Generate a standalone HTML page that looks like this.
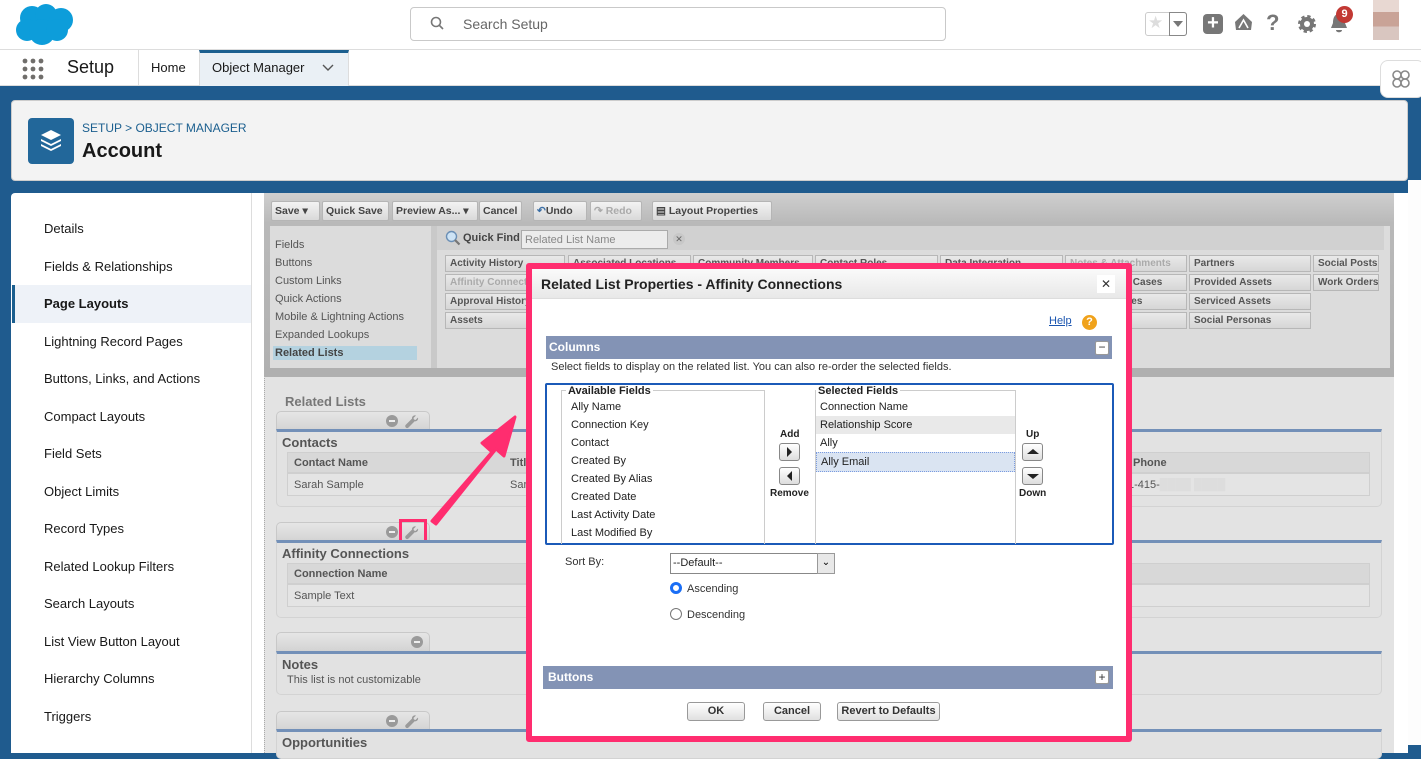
<!DOCTYPE html>
<html><head><meta charset="utf-8"><style>
*{box-sizing:border-box;margin:0;padding:0}
body{width:1421px;height:745px;overflow:hidden;position:relative;font-family:"Liberation Sans",Arial,sans-serif;background:#1f5b8e}
.a{position:absolute}
.sb{position:absolute;left:44px;font-size:13px;color:#181818}
.pb{position:absolute;height:17px;border:1px solid #b7b7b7;background:linear-gradient(#e9e9e9,#d6d6d6);font-size:10px;font-weight:bold;color:#555;padding:2px 4px;white-space:nowrap;overflow:hidden}
.tb{position:absolute;top:201px;height:20px;border:1px solid #b5b5b5;background:linear-gradient(#f3f3f3,#d9d9d9);font-size:10.5px;font-weight:bold;color:#444;padding:3px 3px;white-space:nowrap;border-radius:2px;overflow:hidden}
.pl{position:absolute;left:275px;font-size:11px;color:#555}
.hand{position:absolute;left:276px;width:154px;height:19px;background:linear-gradient(#e6e6e6,#d3d3d3);border:1px solid #c8c8c8;border-bottom:none;border-radius:5px 5px 0 0}
.mi{position:absolute;width:12px;height:12px;border-radius:50%;background:#9a9a9a;top:3px}
.mi:after{content:"";position:absolute;left:3px;top:5px;width:6px;height:2px;background:#eee}
.wr{position:absolute;top:2px}
.blk{position:absolute;left:276px;width:1106px;border-top:3px solid #7390b8;background:#e2e2e2;border-radius:0 0 5px 5px;border-left:1px solid #d3d3d3;border-right:1px solid #d3d3d3;border-bottom:1px solid #d3d3d3}
.bt{font-size:13px;font-weight:bold;color:#555;padding:3px 5px 0}
.th{position:absolute;left:10px;width:1083px;height:21px;background:#d8d8d8;border:1px solid #cfcfcf;font-size:11px;font-weight:bold;color:#555;padding:4px 6px}
.td{position:absolute;left:10px;width:1083px;height:23px;border:1px solid #cfcfcf;font-size:11px;color:#555;padding:5px 6px;background:#e4e4e4}
.li{position:absolute;left:9px;font-size:11px;color:#222}
.sbtn{position:absolute;height:19px;border:1px solid #999;border-radius:3px;background:linear-gradient(#fff,#e0e0e0);font-size:11px;font-weight:bold;color:#333;text-align:center;padding-top:2px}
.ab{position:absolute;width:21px;height:18px;border:1px solid #888;border-radius:3px;background:linear-gradient(#fff,#ddd)}
</style></head><body>
<svg width="0" height="0" style="position:absolute"><defs><symbol id="w" viewBox="0 0 16 16"><path d="M14 3.5 L11.5 6 L10 5.5 L9.5 4 L12 1.5 C10 0.8 7.8 2.2 8 4.6 L1.8 10.8 C1 11.6 1 12.7 1.8 13.5 C2.6 14.3 3.7 14.3 4.5 13.5 L10.7 7.3 C13 7.6 14.6 5.5 14 3.5Z" fill="#9a9a9a"/></symbol></defs></svg>
<!-- top header -->
<div class="a" style="left:0;top:0;width:1421px;height:50px;background:#fff;border-bottom:1px solid #ddd"></div>
<svg class="a" style="left:14px;top:3px" width="60" height="42" viewBox="0 0 60 42"><g fill="#0d9dda"><circle cx="18" cy="15" r="12"/><circle cx="32" cy="12" r="11"/><circle cx="47" cy="17" r="12"/><circle cx="13" cy="27" r="11"/><circle cx="28" cy="29" r="13"/><circle cx="43" cy="27" r="11"/></g></svg>
<div class="a" style="left:410px;top:7px;width:536px;height:34px;border:1px solid #c9c9c9;border-radius:4px;background:#fff"></div>
<svg class="a" style="left:430px;top:16px" width="14" height="14"><circle cx="6" cy="6" r="4.5" stroke="#777" stroke-width="1.6" fill="none"/><line x1="9.5" y1="9.5" x2="13" y2="13" stroke="#777" stroke-width="1.6"/></svg>
<div class="a" style="left:463px;top:16px;font-size:14px;color:#666">Search Setup</div>
<div class="a" style="left:1145px;top:12px;width:42px;height:24px;border:1px solid #ccc;border-radius:3px;background:#fff"></div>
<div class="a" style="left:1148px;top:13px;font-size:17px;color:#ddd">★</div>
<div class="a" style="left:1169px;top:12px;width:18px;height:24px;border:1px solid #888;border-radius:0 3px 3px 0"></div>
<div class="a" style="left:1173px;top:21px;border:5px solid transparent;border-top:6px solid #777"></div>
<div class="a" style="left:1203px;top:14px;width:20px;height:20px;border-radius:4px;background:#777;color:#fff;font-size:20px;line-height:19px;text-align:center;font-weight:bold">+</div>
<svg class="a" style="left:1233px;top:13px" width="21" height="20"><path d="M10.5 1 L19 9 L18 17 L3 17 L2 9Z" fill="#777"/><path d="M6 15 L10.5 7 L15 15" stroke="#fff" stroke-width="1.6" fill="none"/></svg>
<div class="a" style="left:1266px;top:10px;font-size:22px;color:#777;font-weight:bold">?</div>
<svg class="a" style="left:1297px;top:14px" width="20" height="20"><circle cx="10" cy="10" r="7" fill="#777" stroke="#777" stroke-width="4" stroke-dasharray="3 2.5"/><circle cx="10" cy="10" r="3" fill="#fff"/></svg>
<svg class="a" style="left:1328px;top:12px" width="22" height="22"><path d="M11 2 C6 2 5 7 5 11 L3 16 L19 16 L17 11 C17 7 16 2 11 2Z M8 18 L14 18 C14 21 8 21 8 18Z" fill="#777"/></svg>
<div class="a" style="left:1336px;top:6px;width:17px;height:17px;border-radius:50%;background:#c23934;color:#fff;font-size:11px;font-weight:bold;text-align:center;line-height:17px">9</div>
<div class="a" style="left:1373px;top:0;width:26px;height:40px;background:linear-gradient(#e8d8d2 0 30%,#c9a397 30% 66%,#d9c6c0 66%)"></div>
<!-- nav -->
<div class="a" style="left:0;top:50px;width:1421px;height:36px;background:#fff;border-bottom:1px solid #ddd"></div>
<svg class="a" style="left:22px;top:58px" width="22" height="22"><g fill="#706e6b"><circle cx="3" cy="3" r="2.4"/><circle cx="11" cy="3" r="2.4"/><circle cx="19" cy="3" r="2.4"/><circle cx="3" cy="11" r="2.4"/><circle cx="11" cy="11" r="2.4"/><circle cx="19" cy="11" r="2.4"/><circle cx="3" cy="19" r="2.4"/><circle cx="11" cy="19" r="2.4"/><circle cx="19" cy="19" r="2.4"/></g></svg>
<div class="a" style="left:67px;top:57px;font-size:18px;color:#181818">Setup</div>
<div class="a" style="left:138px;top:50px;width:1px;height:36px;background:#ddd"></div>
<div class="a" style="left:151px;top:60px;font-size:13px;color:#181818">Home</div>
<div class="a" style="left:199px;top:50px;width:150px;height:36px;background:#eaf0f5;border-top:3px solid #1b5f8f;border-right:1px solid #ddd;border-left:1px solid #ddd"></div>
<div class="a" style="left:212px;top:60px;font-size:13px;color:#181818">Object Manager</div>
<svg class="a" style="left:322px;top:64px" width="12" height="8"><path d="M1 1 L6 6 L11 1" stroke="#555" stroke-width="1.4" fill="none"/></svg>
<div class="a" style="left:1380px;top:60px;width:45px;height:38px;background:#fff;border-radius:8px;border:1px solid #ddd"></div>
<svg class="a" style="left:1391px;top:69px" width="20" height="20"><g stroke="#888" stroke-width="1.6" fill="none"><circle cx="6" cy="6" r="4"/><circle cx="14" cy="6" r="4"/><circle cx="6" cy="14" r="4"/><circle cx="14" cy="14" r="4"/></g></svg>
<!-- header card -->
<div class="a" style="left:11px;top:100px;width:1397px;height:81px;background:#f3f3f3;border:1px solid #ccc;border-radius:4px"></div>
<div class="a" style="left:28px;top:118px;width:46px;height:46px;background:#22679a;border-radius:4px"></div>
<svg class="a" style="left:39px;top:128px" width="24" height="24"><g fill="#fff"><path d="M12 2 L22 7 L12 12 L2 7Z"/><path d="M2 11 L12 16 L22 11 L22 13 L12 18 L2 13Z"/><path d="M2 16 L12 21 L22 16 L22 18 L12 23 L2 18Z"/></g></svg>
<div class="a" style="left:82px;top:121px;font-size:12px;color:#1b5f8f">SETUP &gt; OBJECT MANAGER</div>
<div class="a" style="left:82px;top:140px;font-size:20px;font-weight:bold;color:#181818">Account</div>
<!-- main -->
<div class="a" style="left:11px;top:193px;width:1397px;height:560px;background:#fff;border-radius:4px 4px 0 0"></div>
<div class="a" style="left:251px;top:193px;width:1px;height:560px;background:#ddd"></div>
<div class="a" style="left:12px;top:285px;width:239px;height:38px;background:#eef2f8;border-left:3px solid #1b5f8f"></div>
<div class="sb" style="top:221px">Details</div>
<div class="sb" style="top:259px">Fields &amp; Relationships</div>
<div class="sb" style="top:296px;font-weight:bold">Page Layouts</div>
<div class="sb" style="top:334px">Lightning Record Pages</div>
<div class="sb" style="top:371px">Buttons, Links, and Actions</div>
<div class="sb" style="top:409px">Compact Layouts</div>
<div class="sb" style="top:446px">Field Sets</div>
<div class="sb" style="top:484px">Object Limits</div>
<div class="sb" style="top:521px">Record Types</div>
<div class="sb" style="top:559px">Related Lookup Filters</div>
<div class="sb" style="top:596px">Search Layouts</div>
<div class="sb" style="top:634px">List View Button Layout</div>
<div class="sb" style="top:671px">Hierarchy Columns</div>
<div class="sb" style="top:709px">Triggers</div>
<!-- right work area -->
<div class="a" style="left:264px;top:193px;width:1130px;height:560px;background:#e3e3e3;border-left:1px dotted #aaa"></div>
<div class="a" style="left:1394px;top:193px;width:14px;height:560px;background:#fff"></div>
<div class="a" style="left:1408px;top:180px;width:13px;height:565px;background:#fdfdfd"></div>
<div class="a" style="left:264px;top:193px;width:1130px;height:184px;background:linear-gradient(#cfcfcf,#b9b9b9 30px,#b0b0b0)"></div>
<div class="a" style="left:270px;top:226px;width:1120px;height:142px;background:#dcdcdc"></div>
<div class="a" style="left:431px;top:226px;width:6px;height:142px;background:#c9c9c9"></div>
<div class="a" style="left:437px;top:226px;width:947px;height:24px;background:#d1d1d1"></div>
<div class="tb" style="left:271px;width:49px">Save ▾</div>
<div class="tb" style="left:322px;width:67px">Quick Save</div>
<div class="tb" style="left:392px;width:86px">Preview As... ▾</div>
<div class="tb" style="left:479px;width:43px">Cancel</div>
<div class="tb" style="left:533px;width:54px"><span style="color:#3a6ea5">↶</span>Undo</div>
<div class="tb" style="left:590px;width:52px;color:#aaa">↷ Redo</div>
<div class="tb" style="left:652px;width:120px">▤ Layout Properties</div>
<div class="pl" style="top:239px">Fields</div>
<div class="pl" style="top:257px">Buttons</div>
<div class="pl" style="top:275px">Custom Links</div>
<div class="pl" style="top:293px">Quick Actions</div>
<div class="pl" style="top:311px">Mobile &amp; Lightning Actions</div>
<div class="pl" style="top:329px">Expanded Lookups</div>
<div class="a" style="left:273px;top:346px;width:144px;height:14px;background:#b4d2e0"></div>
<div class="pl" style="top:347px;font-weight:bold;color:#444">Related Lists</div>
<svg class="a" style="left:445px;top:230px" width="16" height="16"><circle cx="6.5" cy="6.5" r="5" fill="#cde3f5" stroke="#6b8fb5" stroke-width="1.4"/><line x1="10" y1="10" x2="14.5" y2="14.5" stroke="#777" stroke-width="2.2"/></svg>
<div class="a" style="left:463px;top:232px;font-size:11px;font-weight:bold;color:#444">Quick Find</div>
<div class="a" style="left:521px;top:230px;width:147px;height:19px;border:1px solid #aaa;background:#ececec;font-size:11px;color:#888;padding:3px 3px">Related List Name</div>
<div class="a" style="left:673px;top:233px;width:12px;height:12px;border-radius:50%;background:#c8c8c8;font-size:9px;color:#666;text-align:center;line-height:12px">✕</div>
<div class="pb" style="left:445px;top:255px;width:120px">Activity History</div>
<div class="pb" style="left:568px;top:255px;width:123px">Associated Locations</div>
<div class="pb" style="left:693px;top:255px;width:120px">Community Members</div>
<div class="pb" style="left:815px;top:255px;width:123px">Contact Roles</div>
<div class="pb" style="left:940px;top:255px;width:123px">Data Integration</div>
<div class="pb" style="left:1065px;top:255px;width:122px;color:#aaa">Notes &amp; Attachments</div>
<div class="pb" style="left:1189px;top:255px;width:122px">Partners</div>
<div class="pb" style="left:1313px;top:255px;width:66px">Social Posts</div>
<div class="pb" style="left:445px;top:274px;width:120px;color:#aaa">Affinity Connections</div>
<div class="pb" style="left:1065px;top:274px;width:122px">Entitlements Cases</div>
<div class="pb" style="left:1189px;top:274px;width:122px">Provided Assets</div>
<div class="pb" style="left:1313px;top:274px;width:66px">Work Orders</div>
<div class="pb" style="left:445px;top:293px;width:120px">Approval History</div>
<div class="pb" style="left:1065px;top:293px;width:122px">Open Activities</div>
<div class="pb" style="left:1189px;top:293px;width:122px">Serviced Assets</div>
<div class="pb" style="left:445px;top:312px;width:120px">Assets</div>
<div class="pb" style="left:1065px;top:312px;width:122px">Orders</div>
<div class="pb" style="left:1189px;top:312px;width:122px">Social Personas</div>
<!-- related lists -->
<div class="a" style="left:285px;top:394px;font-size:13px;font-weight:bold;color:#777">Related Lists</div>
<div class="hand" style="top:411px"><div class="mi" style="left:109px"></div><svg class="wr" style="left:127px" width="16" height="16"><use href="#w"/></svg></div>
<div class="blk" style="top:429px;height:78px"><div class="bt">Contacts</div>
<div class="th" style="top:20px">Contact Name<span style="position:absolute;left:222px">Title</span><span style="position:absolute;left:845px">Phone</span></div>
<div class="td" style="top:41px">Sarah Sample<span style="position:absolute;left:222px">Sarah</span><span style="position:absolute;left:840px">1-415-<span style="color:#ddd">████ ████</span></span></div></div>
<div class="hand" style="top:522px"><div class="mi" style="left:109px"></div><svg class="wr" style="left:127px" width="16" height="16"><use href="#w"/></svg></div>
<div class="a" style="left:399px;top:519px;width:28px;height:26px;border:3px solid #ff2d6f"></div>
<div class="blk" style="top:540px;height:78px"><div class="bt">Affinity Connections</div>
<div class="th" style="top:20px">Connection Name</div>
<div class="td" style="top:41px">Sample Text</div></div>
<div class="hand" style="top:632px"><div class="mi" style="left:134px"></div></div>
<div class="blk" style="top:651px;height:44px"><div class="bt">Notes</div><div style="font-size:11px;color:#555;padding:2px 10px">This list is not customizable</div></div>
<div class="hand" style="top:711px"><div class="mi" style="left:109px"></div><svg class="wr" style="left:127px" width="16" height="16"><use href="#w"/></svg></div>
<div class="blk" style="top:729px;height:30px"><div class="bt">Opportunities</div></div>
<!-- arrow -->
<svg class="a" style="left:420px;top:405px" width="110" height="125"><path d="M12 116 L72 47 L62 38 L95 12 L84 51 L76 44 L16 119Z" fill="#ff2d6f" stroke="#ff2d6f" stroke-width="3" stroke-linejoin="round"/></svg>
<!-- dialog -->
<div class="a" style="left:526px;top:263px;width:606px;height:479px;border:6px solid #ff2d6f;background:#fff;border-radius:3px"></div>
<div class="a" style="left:532px;top:269px;width:594px;height:30px;background:linear-gradient(#fafafa,#e8e8e8);border-bottom:1px solid #ddd"></div>
<div class="a" style="left:541px;top:276px;font-size:14px;font-weight:bold;color:#222">Related List Properties - Affinity Connections</div>
<div class="a" style="left:1097px;top:275px;width:18px;height:18px;background:#fff;font-size:12px;color:#333;text-align:center;line-height:18px">✕</div>
<div class="a" style="left:1049px;top:315px;font-size:11px;color:#1a55b0;text-decoration:underline">Help</div>
<div class="a" style="left:1082px;top:315px;width:15px;height:15px;border-radius:50%;background:#f0a21b;color:#fff;font-size:11px;font-weight:bold;text-align:center;line-height:15px">?</div>
<div class="a" style="left:546px;top:336px;width:566px;height:23px;background:#8393b5;color:#fff;font-size:12px;font-weight:bold;padding:4px 3px">Columns</div>
<div class="a" style="left:1095px;top:341px;width:14px;height:14px;background:#fff;border:1px solid #999;border-radius:2px;font-size:12px;line-height:10px;text-align:center;color:#333">−</div>
<div class="a" style="left:551px;top:361px;font-size:11px;color:#333">Select fields to display on the related list. You can also re-order the selected fields.</div>
<div class="a" style="left:545px;top:383px;width:569px;height:162px;border:2px solid #1b5ab8;border-radius:2px"></div>
<div class="a" style="left:561px;top:390px;width:204px;height:154px;border:1px solid #ccc;border-bottom:none">
<div class="li" style="top:10px">Ally Name</div><div class="li" style="top:28px">Connection Key</div><div class="li" style="top:46px">Contact</div><div class="li" style="top:64px">Created By</div><div class="li" style="top:82px">Created By Alias</div><div class="li" style="top:100px">Created Date</div><div class="li" style="top:118px">Last Activity Date</div><div class="li" style="top:136px">Last Modified By</div></div>
<div class="a" style="left:566px;top:385px;font-size:11px;font-weight:bold;background:#fff;padding:0 2px;color:#222">Available Fields</div>
<div class="a" style="left:815px;top:390px;width:201px;height:154px;border:1px solid #ccc;border-bottom:none">
<div class="a" style="left:0;top:25px;width:199px;height:18px;background:#e9e9e9"></div>
<div class="a" style="left:0;top:61px;width:199px;height:20px;background:#dae4f2;border:1px dotted #7a9be0"></div>
<div class="li" style="left:4px;top:10px">Connection Name</div><div class="li" style="left:4px;top:28px">Relationship Score</div><div class="li" style="left:4px;top:46px">Ally</div><div class="li" style="left:5px;top:65px">Ally Email</div></div>
<div class="a" style="left:816px;top:385px;font-size:11px;font-weight:bold;background:#fff;padding:0 2px;color:#222">Selected Fields</div>
<div class="a" style="left:780px;top:429px;font-size:10px;font-weight:bold;color:#222">Add</div>
<div class="ab" style="left:779px;top:443px"><div class="a" style="left:7px;top:3px;border:5px solid transparent;border-left:5px solid #222;border-right:none"></div></div>
<div class="ab" style="left:779px;top:467px"><div class="a" style="left:7px;top:3px;border:5px solid transparent;border-right:5px solid #222;border-left:none"></div></div>
<div class="a" style="left:770px;top:488px;font-size:10px;font-weight:bold;color:#222">Remove</div>
<div class="a" style="left:1026px;top:429px;font-size:10px;font-weight:bold;color:#222">Up</div>
<div class="ab" style="left:1022px;top:443px"><div class="a" style="left:4px;top:5px;border:6px solid transparent;border-bottom:5px solid #222;border-top:none"></div></div>
<div class="ab" style="left:1022px;top:467px"><div class="a" style="left:4px;top:6px;border:6px solid transparent;border-top:5px solid #222;border-bottom:none"></div></div>
<div class="a" style="left:1019px;top:488px;font-size:10px;font-weight:bold;color:#222">Down</div>
<div class="a" style="left:565px;top:556px;font-size:11px;color:#333">Sort By:</div>
<div class="a" style="left:670px;top:553px;width:165px;height:21px;border:1px solid #888;font-size:11px;color:#222;padding:3px 2px;background:#fff">--Default--</div>
<div class="a" style="left:817px;top:553px;width:18px;height:21px;border:1px solid #999;background:#e8e8e8;font-size:10px;text-align:center;line-height:18px">⌄</div>
<div class="a" style="left:670px;top:582px;width:12px;height:12px;border-radius:50%;border:3.5px solid #1a6ef5;background:#fff"></div>
<div class="a" style="left:687px;top:583px;font-size:11px;color:#333">Ascending</div>
<div class="a" style="left:670px;top:608px;width:12px;height:12px;border-radius:50%;border:1px solid #777;background:#fff"></div>
<div class="a" style="left:687px;top:609px;font-size:11px;color:#333">Descending</div>
<div class="a" style="left:543px;top:666px;width:570px;height:23px;background:#8393b5;color:#fff;font-size:12px;font-weight:bold;padding:4px 5px">Buttons</div>
<div class="a" style="left:1095px;top:670px;width:14px;height:14px;background:#fff;border:1px solid #999;border-radius:2px;font-size:12px;line-height:12px;text-align:center;color:#333">+</div>
<div class="sbtn" style="left:687px;top:702px;width:58px">OK</div>
<div class="sbtn" style="left:763px;top:702px;width:58px">Cancel</div>
<div class="sbtn" style="left:837px;top:702px;width:103px">Revert to Defaults</div>
</body></html>
